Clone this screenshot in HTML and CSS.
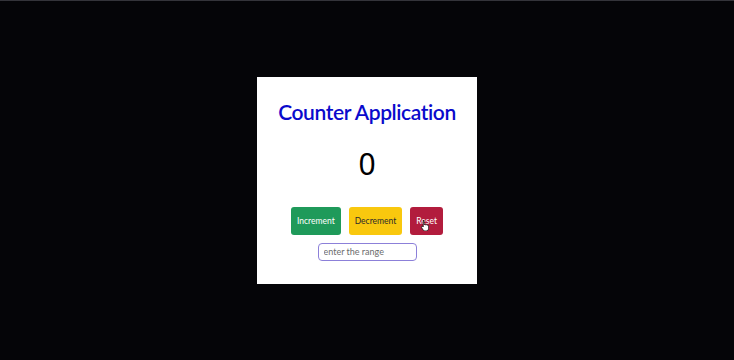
FILE: index.html
```html
<!DOCTYPE html>
<html lang="en">
<head>
<meta charset="utf-8">
<title>Counter Application</title>
<link rel="stylesheet" href="styles.css">
</head>
<body>
<div class="app">
  <div class="card">
    <h1 class="title">Counter Application</h1>
    <div class="count">0</div>
    <div class="actions">
      <button class="btn btn-success">Increment</button>
      <button class="btn btn-warning">Decrement</button>
      <button class="btn btn-danger">Reset
        <svg class="cursor" width="8" height="11" viewBox="0 0 9 12"><path d="M2.5 0.6c.6 0 1 .4 1 1v3.6c.2-.3.5-.4.8-.4.5 0 .8.3.9.6.2-.3.5-.4.8-.4.5 0 .9.4.9.8.2-.2.4-.3.7-.3.6 0 1 .4 1 1v2.6c0 1.6-1.2 3-2.8 3H4.4c-.8 0-1.5-.4-2-1L.6 8.2c-.3-.4-.2-1 .2-1.2.4-.3.9-.2 1.2.1l.5.6V1.6c0-.6.4-1 1-1z" fill="#fff" stroke="#000" stroke-width="0.8"/></svg>
      </button>
    </div>
    <input class="range" type="text" placeholder="enter the range">
  </div>
</div>
</body>
</html>
```
FILE: styles.css
```css
html, body {
  margin: 0;
  height: 100%;
}
body {
  background: #050508;
  border-top: 1px solid #34343a;
  box-sizing: border-box;
  font-family: Lato, "Noto Sans", sans-serif;
}
.app {
  height: 100%;
  display: flex;
  align-items: center;
  justify-content: center;
}
.card {
  width: 220px;
  height: 207px;
  box-sizing: border-box;
  background: #fff;
  display: flex;
  flex-direction: column;
  align-items: center;
  padding-top: 22px;
  margin-top: -1px;
}
.title {
  margin: 0;
  font-size: 21px;
  line-height: 26px;
  font-weight: 600;
  letter-spacing: -0.4px;
  color: #0a0acc;
}
.count {
  margin-top: 21px;
  font-size: 30px;
  line-height: 36px;
  font-family: "Noto Sans", sans-serif;
  color: #000;
}
.actions {
  margin-top: 25px;
  display: flex;
  gap: 8px;
}
.btn {
  position: relative;
  height: 28px;
  padding: 0 6px;
  border: none;
  border-radius: 3px;
  font-family: inherit;
  font-size: 8.5px;
}
.btn-success { background: #1f9a5a; color: #fff; }
.btn-warning { background: #f9c80e; color: #2b2b2b; }
.btn-danger  { background: #b21c3d; color: #fff; }
.cursor {
  position: absolute;
  left: 11px;
  top: 13px;
}
.range {
  margin-top: 8px;
  width: 99px;
  height: 18px;
  box-sizing: border-box;
  border: 1px solid #8c80d9;
  border-radius: 4px;
  padding: 0 5px;
  font-family: inherit;
  font-size: 9px;
  outline: none;
}
.range::placeholder { color: #6c6c6c; }
```
